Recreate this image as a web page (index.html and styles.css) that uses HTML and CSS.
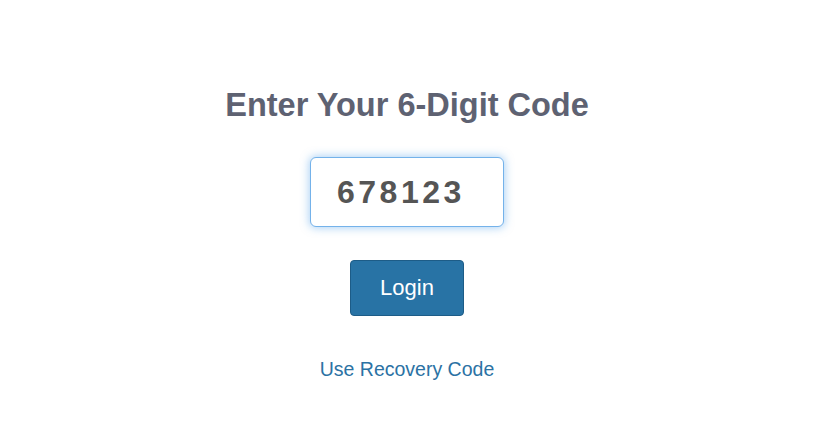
FILE: index.html
```html
<!DOCTYPE html>
<html>
<head>
<meta charset="utf-8">
<link rel="stylesheet" href="styles.css">
</head>
<body>
<main class="page">
  <h1 class="title">Enter Your 6-Digit Code</h1>
  <div class="code-box"><span class="code">678123</span></div>
  <button class="login">Login</button>
  <a class="recovery" href="#">Use Recovery Code</a>
</main>
</body>
</html>
```
FILE: styles.css
```css
html, body {
  margin: 0;
  padding: 0;
  background: #ffffff;
}
body {
  font-family: "Liberation Sans", Arial, sans-serif;
}
.page {
  display: flex;
  flex-direction: column;
  align-items: center;
  padding-top: 87px;
}
.title {
  margin: 0;
  font-size: 32.5px;
  line-height: 36px;
  font-weight: bold;
  color: #5e6272;
}
.code-box {
  margin-top: 34px;
  width: 194px;
  height: 70px;
  box-sizing: border-box;
  border: 1px solid #74b2ea;
  border-radius: 6px;
  box-shadow: 0 0 8px 1px rgba(90, 165, 235, 0.5);
  display: flex;
  align-items: center;
  padding-left: 26px;
  background: #fff;
}
.code {
  font-size: 32px;
  font-weight: bold;
  letter-spacing: 3.5px;
  color: #555555;
}
.login {
  margin-top: 33px;
  width: 114px;
  height: 56px;
  box-sizing: border-box;
  background: #2873a5;
  border: 1px solid #1d5c87;
  border-radius: 4px;
  color: #ffffff;
  font-family: "Liberation Sans", Arial, sans-serif;
  font-size: 22px;
  padding: 0;
}
.recovery {
  margin-top: 42px;
  font-size: 19.5px;
  color: #2b72a4;
  text-decoration: none;
}
```
